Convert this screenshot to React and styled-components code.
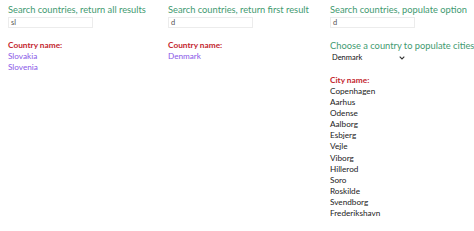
import React from "react";
import styled, { createGlobalStyle } from "styled-components";

const Global = createGlobalStyle`
  body { margin: 0; background: #fff; font-family: Lato, "Noto Sans", sans-serif; }
`;

const Page = styled.div`
  display: flex;
  padding: 3px 0 0 8px;
`;

const Column = styled.div`
  width: ${(p) => p.$w}px;
  flex: none;
  display: flex;
  flex-direction: column;
`;

const Title = styled.div`
  color: #3f9a70;
  font-size: 9.3px;
  line-height: 14px;
  white-space: nowrap;
`;

const Input = styled.div`
  width: 85px;
  height: 11px;
  box-sizing: border-box;
  border: 1px solid #ececec;
  font-size: 7.5px;
  line-height: 9px;
  padding-left: 2px;
  color: #555;
`;

const Label = styled.div`
  color: #c3262e;
  font-weight: 700;
  font-size: 8.3px;
  line-height: 11px;
  margin-top: ${(p) => p.$mt}px;
`;

const Country = styled.div`
  color: #8a58e8;
  font-size: 8.2px;
  line-height: 11px;
`;

const City = styled.div`
  color: #222;
  font-size: 8.2px;
  line-height: 11.1px;
`;

const Select = styled.div`
  width: 78px;
  height: 11px;
  margin-top: -1px;
  display: flex;
  align-items: center;
  justify-content: space-between;
  font-size: 7.5px;
  color: #111;
  box-sizing: border-box;
  padding: 0 3px 0 2px;
`;

const Sub = styled(Title)`
  margin-top: 11px;
`;

const cities = [
  "Copenhagen", "Aarhus", "Odense", "Aalborg", "Esbjerg", "Vejle",
  "Viborg", "Hillerod", "Soro", "Roskilde", "Svendborg", "Frederikshavn",
];

export default function App() {
  return (
    <>
      <Global />
      <Page>
        <Column $w={160}>
          <Title>Search countries, return all results</Title>
          <Input>sl</Input>
          <Label $mt={11.5}>Country name:</Label>
          <Country>Slovakia</Country>
          <Country>Slovenia</Country>
        </Column>
        <Column $w={162}>
          <Title>Search countries, return first result</Title>
          <Input>d</Input>
          <Label $mt={11.5}>Country name:</Label>
          <Country>Denmark</Country>
        </Column>
        <Column $w={144}>
          <Title>Search countries, populate option</Title>
          <Input>d</Input>
          <Sub>Choose a country to populate cities</Sub>
          <Select>
            <span>Denmark</span>
            <svg width="6" height="4" viewBox="0 0 6 4"><path d="M0.7 0.7 L3 3 L5.3 0.7" fill="none" stroke="#333" strokeWidth="1.1" /></svg>
          </Select>
          <Label $mt={12}>City name:</Label>
          {cities.map((c) => <City key={c}>{c}</City>)}
        </Column>
      </Page>
    </>
  );
}
